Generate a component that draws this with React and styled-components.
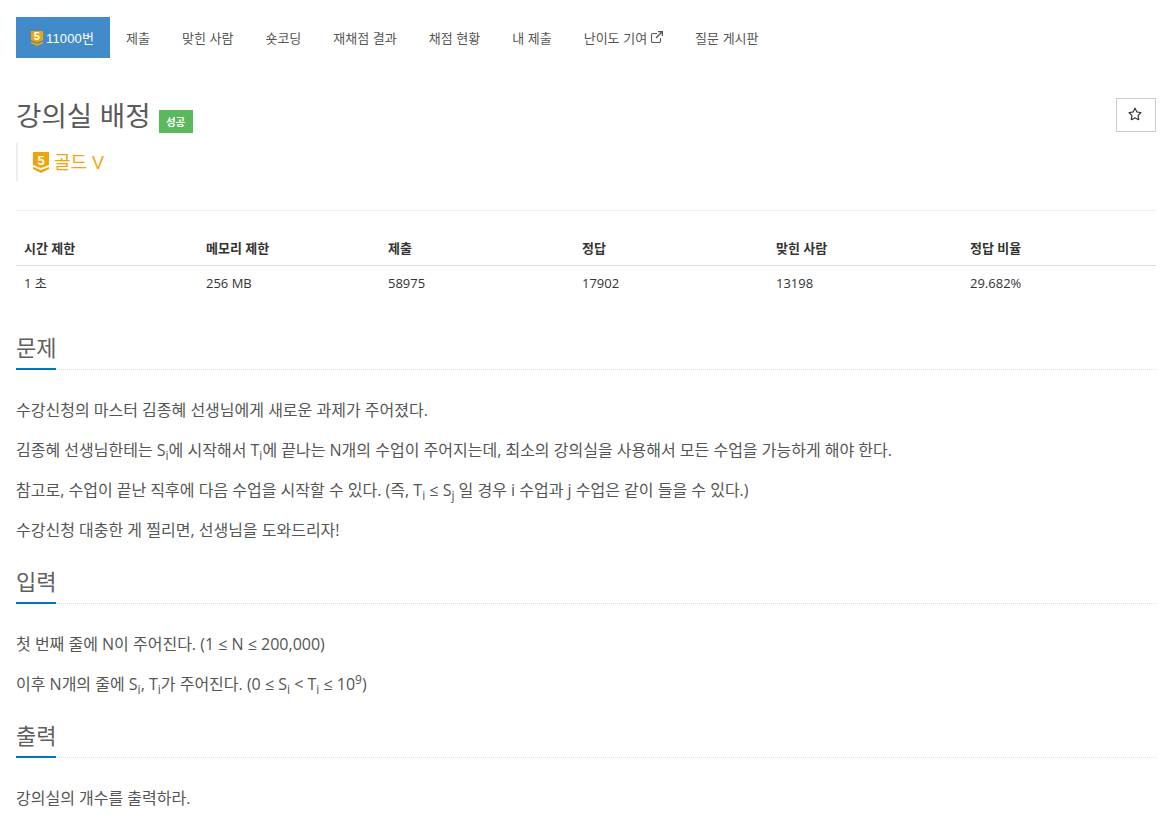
import styled, { createGlobalStyle } from "styled-components";
import { FaRegStar } from "react-icons/fa";

const GlobalStyle = createGlobalStyle`
  * { box-sizing: border-box; }
  body {
    margin: 0;
    background: #fff;
    color: #555;
    font-family: "Open Sans", "Noto Sans CJK KR", sans-serif;
    font-size: 14px;
    overflow: hidden;
  }
`;

const Page = styled.div`
  width: 1173px;
  height: 831px;
  padding: 17px 17px 0 16px;
  overflow: hidden;
`;

const Nav = styled.ul`
  display: flex;
  list-style: none;
  margin: 0;
  padding: 0;
  height: 41px;
`;

const NavItem = styled.li`
  display: flex;
  align-items: center;
  gap: ${(p) => (p.$active ? "3px" : "4px")};
  height: 41px;
  padding: 0 16px 1px ${(p) => (p.$active ? "15px" : "16px")};
  background: ${(p) => (p.$active ? "#428bca" : "transparent")};
  color: ${(p) => (p.$active ? "#fff" : "#555")};
  font-family: "Liberation Sans", "Noto Sans CJK KR", sans-serif;
  font-size: 13px;
  letter-spacing: ${(p) => (p.$active ? "0.15px" : "0")};
  white-space: nowrap;
`;

const TitleRow = styled.div`
  display: flex;
  justify-content: space-between;
  align-items: flex-start;
  margin-top: 40px;
  height: 36px;
`;

const TitleGroup = styled.div`
  display: flex;
  align-items: center;
  gap: 8px;
`;

const Title = styled.h1`
  margin: 0;
  font-family: "Liberation Sans", "Noto Sans CJK KR", sans-serif;
  font-size: 27.6px;
  font-weight: 400;
  line-height: 38px;
  color: #5a5a5a;
`;

const Label = styled.span`
  display: flex;
  align-items: center;
  justify-content: center;
  width: 34px;
  height: 23px;
  margin-top: 9px;
  background: #5cb85c;
  color: #fff;
  font-family: "Liberation Sans", "Noto Sans CJK KR", sans-serif;
  font-size: 10.5px;
  font-weight: 700;
`;

const StarButton = styled.button`
  display: flex;
  align-items: center;
  justify-content: center;
  width: 40px;
  height: 34px;
  padding: 0 2px 2px 0;
  border: 1px solid #ccc;
  background: #fff;
  color: #333;
  font-size: 14px;
`;

const Tier = styled.blockquote`
  display: flex;
  align-items: center;
  gap: 5px;
  height: 38px;
  margin: 9px 0 0;
  padding: 0 0 3px 15px;
  border-left: 2px solid #eee;
  color: #f0a30a;
  font-family: "Liberation Sans", "Noto Sans CJK KR", sans-serif;
  font-size: 18px;
`;

const Badge = styled.svg`
  flex: none;
  margin-top: ${(p) => p.$drop || 0}px;
`;

const Divider = styled.hr`
  height: 1px;
  margin: 29px 0 0;
  border: 0;
  background: #eee;
`;

const Stats = styled.table`
  width: 1140px;
  margin-top: 20px;
  border-collapse: collapse;
  table-layout: fixed;
  color: #333;
  font-size: 13px;
`;

const HeadCell = styled.th`
  width: ${(p) => p.$width}px;
  height: 34px;
  padding: 0 8px 1px;
  border-bottom: 1px solid #ddd;
  text-align: left;
  font-weight: 700;
`;

const Cell = styled.td`
  height: 35px;
  padding: 0 8px;
  text-align: left;
`;

const Section = styled.section`
  margin-top: ${(p) => p.$top}px;
`;

const Heading = styled.div`
  height: 42px;
  border-bottom: 1px dotted #ddd;
  position: relative;
  font-size: 22px;
  font-family: "Noto Sans CJK KR", sans-serif;
  line-height: 37px;
  color: #5f5f5f;
  &::after {
    content: "";
    position: absolute;
    left: 0;
    bottom: -1px;
    width: 40px;
    height: 2px;
    background: #0076c0;
  }
`;

const Para = styled.p`
  margin: 0;
  padding: 0;
  height: 40px;
  line-height: 40px;
  font-size: 16px;
  white-space: nowrap;
  color: #555;
  sub, sup { font-size: 12px; line-height: 0; }
`;

const Body = styled.div`
  padding-top: 20px;
`;

function TierIcon({ width, height, drop, digitSize = 13, color = "#f0a30a", digit = "#fff" }) {
  return (
    <Badge $drop={drop} width={width} height={height} viewBox="0 0 16 21" preserveAspectRatio="none">
      <path d="M0 0h16v13l-8 3-8-3z" fill={color} />
      <path d="M0 15l8 3 8-3v2l-8 4-8-4z" fill={color} />
      <text x="8" y="12.5" textAnchor="middle" fontSize={digitSize} fontWeight="700" fontFamily="Liberation Sans" fill={digit}>5</text>
    </Badge>
  );
}

function ExternalLink() {
  return (
    <svg width="12" height="12" viewBox="0 0 12 12" fill="none" stroke="#555">
      <path d="M9.5 7v3a1.5 1.5 0 0 1-1.5 1.5H2A1.5 1.5 0 0 1 .5 10V4A1.5 1.5 0 0 1 2 2.5h4" strokeWidth="1.1" />
      <path d="M7 0.5h4.5V5M11.2 .8L5 7" strokeWidth="1.4" />
    </svg>
  );
}

const navItems = ["제출", "맞힌 사람", "숏코딩", "재채점 결과", "채점 현황", "내 제출"];
const columns = [
  ["시간 제한", "1 초", 182],
  ["메모리 제한", "256 MB", 182],
  ["제출", "58975", 194],
  ["정답", "17902", 194],
  ["맞힌 사람", "13198", 194],
  ["정답 비율", "29.682%", 194],
];

export default function App() {
  return (
    <Page>
      <GlobalStyle />
      <Nav>
        <NavItem $active>
          <TierIcon width={12} height={15} drop={2} digitSize={15} />
          11000번
        </NavItem>
        {navItems.map((item) => (
          <NavItem key={item}>{item}</NavItem>
        ))}
        <NavItem>
          난이도 기여
          <ExternalLink />
        </NavItem>
        <NavItem>질문 게시판</NavItem>
      </Nav>
      <TitleRow>
        <TitleGroup>
          <Title>강의실 배정</Title>
          <Label>성공</Label>
        </TitleGroup>
        <StarButton aria-label="즐겨찾기">
          <FaRegStar />
        </StarButton>
      </TitleRow>
      <Tier>
        <TierIcon width={16} height={21} drop={4} />
        골드 V
      </Tier>
      <Divider />
      <Stats>
        <thead>
          <tr>
            {columns.map(([name, , width]) => (
              <HeadCell key={name} $width={width}>{name}</HeadCell>
            ))}
          </tr>
        </thead>
        <tbody>
          <tr>
            {columns.map(([name, value]) => (
              <Cell key={name}>{value}</Cell>
            ))}
          </tr>
        </tbody>
      </Stats>
      <Section $top={28}>
        <Heading>문제</Heading>
        <Body>
          <Para>수강신청의 마스터 김종혜 선생님에게 새로운 과제가 주어졌다.</Para>
          <Para>김종혜 선생님한테는 S<sub>i</sub>에 시작해서 T<sub>i</sub>에 끝나는 N개의 수업이 주어지는데, 최소의 강의실을 사용해서 모든 수업을 가능하게 해야 한다.</Para>
          <Para>참고로, 수업이 끝난 직후에 다음 수업을 시작할 수 있다. (즉, T<sub>i</sub> ≤ S<sub>j</sub> 일 경우 i 수업과 j 수업은 같이 들을 수 있다.)</Para>
          <Para>수강신청 대충한 게 찔리면, 선생님을 도와드리자!</Para>
        </Body>
      </Section>
      <Section $top={12}>
        <Heading>입력</Heading>
        <Body>
          <Para>첫 번째 줄에 N이 주어진다. (1 ≤ N ≤ 200,000)</Para>
          <Para>이후 N개의 줄에 S<sub>i</sub>, T<sub>i</sub>가 주어진다. (0 ≤ S<sub>i</sub> &lt; T<sub>i</sub> ≤ 10<sup>9</sup>)</Para>
        </Body>
      </Section>
      <Section $top={12}>
        <Heading>출력</Heading>
        <Body>
          <Para>강의실의 개수를 출력하라.</Para>
        </Body>
      </Section>
    </Page>
  );
}
